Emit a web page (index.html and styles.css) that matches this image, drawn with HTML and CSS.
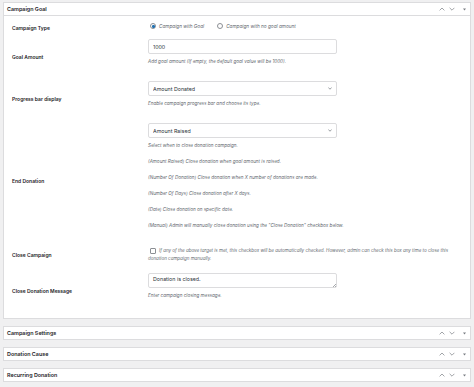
FILE: index.html
```html
<!DOCTYPE html>
<html lang="en">
<head>
    <meta charset="UTF-8">
    <meta name="viewport" content="width=device-width, initial-scale=1.0">
    <title>Campaign Goal</title>
    <link rel="stylesheet" href="styles.css">
</head>
<body>

    <div class="postbox open">
        <div class="postbox-header">
            <h2>Campaign Goal</h2>
            <div class="handle-actions">
                <svg width="6" height="4" viewBox="0 0 6 4"><path d="M0.6 3.4 L3 1 L5.4 3.4" fill="none" stroke="#787c82" stroke-width="0.7"/></svg>
                <svg width="6" height="4" viewBox="0 0 6 4"><path d="M0.6 0.8 L3 3.2 L5.4 0.8" fill="none" stroke="#787c82" stroke-width="0.7"/></svg>
                <svg class="caret" width="3" height="3" viewBox="0 0 3 3"><path d="M0 0.6 H3 L1.5 2.4 Z" fill="#787c82"/></svg>
            </div>
        </div>
        <div class="inside">
            <div class="field-row">
                <div class="field-label">Campaign Type</div>
                <div class="field-input radio-group">
                    <label class="choice"><input type="radio" name="campaign_type" checked>Campaign with Goal</label>
                    <label class="choice"><input type="radio" name="campaign_type">Campaign with no goal amount</label>
                </div>
            </div>

            <div class="field-row">
                <div class="field-label">Goal Amount</div>
                <div class="field-input">
                    <input type="text" class="text-input" value="1000">
                    <p class="description">Add goal amount (If empty, the default goal value will be 1000).</p>
                </div>
            </div>

            <div class="field-row">
                <div class="field-label">Progress bar display</div>
                <div class="field-input">
                    <div class="select-wrap">
                        <select class="select-input">
                            <option>Amount Donated</option>
                        </select>
                        <svg class="select-arrow" width="4" height="3" viewBox="0 0 4 3"><path d="M0.4 0.7 L2 2.2 L3.6 0.7" fill="none" stroke="#50575e" stroke-width="0.6"/></svg>
                    </div>
                    <p class="description">Enable campaign progress bar and choose its type.</p>
                </div>
            </div>

            <div class="field-row">
                <div class="field-label">End Donation</div>
                <div class="field-input">
                    <div class="select-wrap">
                        <select class="select-input">
                            <option>Amount Raised</option>
                        </select>
                        <svg class="select-arrow" width="4" height="3" viewBox="0 0 4 3"><path d="M0.4 0.7 L2 2.2 L3.6 0.7" fill="none" stroke="#50575e" stroke-width="0.6"/></svg>
                    </div>
                    <p class="description">Select when to close donation campaign.</p>
                    <p class="description">(Amount Raised) Close donation when goal amount is raised.</p>
                    <p class="description">(Number Of Donation) Close donation when X number of donations are made.</p>
                    <p class="description">(Number Of Days) Close donation after X days.</p>
                    <p class="description">(Date) Close donation on specific date.</p>
                    <p class="description">(Manual) Admin will manually close donation using the "Close Donation" checkbox below.</p>
                </div>
            </div>

            <div class="field-row checkbox-row">
                <div class="field-label">Close Campaign</div>
                <div class="field-input checkbox-text">
                    <input type="checkbox">If any of the above target is met, this checkbox will be automatically checked. However, admin can check this box any time to close this donation campaign manually.
                </div>
            </div>

            <div class="field-row">
                <div class="field-label">Close Donation Message</div>
                <div class="field-input">
                    <div class="textarea-wrap">
                        <textarea class="textarea-input">Donation is closed.</textarea>
                    </div>
                    <p class="description">Enter campaign closing message.</p>
                </div>
            </div>
        </div>
    </div>

    <div class="postbox">
        <div class="postbox-header">
            <h2>Campaign Settings</h2>
            <div class="handle-actions">
                <svg width="6" height="4" viewBox="0 0 6 4"><path d="M0.6 3.4 L3 1 L5.4 3.4" fill="none" stroke="#787c82" stroke-width="0.7"/></svg>
                <svg width="6" height="4" viewBox="0 0 6 4"><path d="M0.6 0.8 L3 3.2 L5.4 0.8" fill="none" stroke="#787c82" stroke-width="0.7"/></svg>
                <svg class="caret" width="3" height="3" viewBox="0 0 3 3"><path d="M0 0.6 H3 L1.5 2.4 Z" fill="#787c82"/></svg>
            </div>
        </div>
    </div>

    <div class="postbox">
        <div class="postbox-header">
            <h2>Donation Cause</h2>
            <div class="handle-actions">
                <svg width="6" height="4" viewBox="0 0 6 4"><path d="M0.6 3.4 L3 1 L5.4 3.4" fill="none" stroke="#787c82" stroke-width="0.7"/></svg>
                <svg width="6" height="4" viewBox="0 0 6 4"><path d="M0.6 0.8 L3 3.2 L5.4 0.8" fill="none" stroke="#787c82" stroke-width="0.7"/></svg>
                <svg class="caret" width="3" height="3" viewBox="0 0 3 3"><path d="M0 0.6 H3 L1.5 2.4 Z" fill="#787c82"/></svg>
            </div>
        </div>
    </div>

    <div class="postbox">
        <div class="postbox-header">
            <h2>Recurring Donation</h2>
            <div class="handle-actions">
                <svg width="6" height="4" viewBox="0 0 6 4"><path d="M0.6 3.4 L3 1 L5.4 3.4" fill="none" stroke="#787c82" stroke-width="0.7"/></svg>
                <svg width="6" height="4" viewBox="0 0 6 4"><path d="M0.6 0.8 L3 3.2 L5.4 0.8" fill="none" stroke="#787c82" stroke-width="0.7"/></svg>
                <svg class="caret" width="3" height="3" viewBox="0 0 3 3"><path d="M0 0.6 H3 L1.5 2.4 Z" fill="#787c82"/></svg>
            </div>
        </div>
    </div>

</body>
</html>
```

FILE: styles.css
```css
body {
    margin: 0;
    padding: 2px 3px;
    background: #f0f0f1;
    font-family: Inter, "Noto Sans", sans-serif;
    color: #1d2327;
}

.postbox {
    background: #fff;
    border: 1px solid #dcdcde;
    margin-bottom: 7px;
}

.postbox-header {
    display: flex;
    align-items: center;
    justify-content: space-between;
    height: 12px;
    padding: 0 4px 0 3px;
}

.postbox.open .postbox-header {
    border-bottom: 1px solid #dcdcde;
}

.postbox-header h2 {
    margin: 0;
    font-size: 5.4px;
    font-weight: 600;
}

.handle-actions {
    display: flex;
    align-items: center;
    gap: 4px;
}

.handle-actions svg {
    display: block;
}

.handle-actions .caret {
    margin-left: 4px;
}

.inside {
    display: flex;
    flex-direction: column;
    gap: 7px;
    padding: 7px 12px 10px 8px;
}

.field-row {
    display: grid;
    grid-template-columns: 136px 1fr;
}

.checkbox-row {
    padding: 2px 0 3px;
}

.field-label {
    align-self: center;
    font-size: 5px;
    font-weight: 600;
}

.radio-group {
    display: flex;
    align-items: center;
    gap: 11px;
    height: 6px;
    padding-bottom: 3px;
}

.choice {
    display: flex;
    align-items: center;
    font-size: 4.7px;
    font-style: italic;
    color: #646970;
}

input[type="radio"],
input[type="checkbox"] {
    appearance: none;
    box-sizing: border-box;
    width: 6px;
    height: 6px;
    margin: 0 3px 0 2px;
    border: 0.6px solid #8c8f94;
    background: #fff;
}

input[type="radio"] {
    border-radius: 50%;
    position: relative;
}

input[type="radio"]:checked::before {
    content: "";
    position: absolute;
    left: 1.2px;
    top: 1.2px;
    width: 2.4px;
    height: 2.4px;
    border-radius: 50%;
    background: #2271b1;
}

input[type="checkbox"] {
    border-radius: 1px;
    vertical-align: -1.5px;
}

.text-input,
.select-input,
.textarea-input {
    display: block;
    box-sizing: border-box;
    width: 189px;
    height: 15px;
    margin: 0;
    border: 1px solid #dcdcde;
    border-radius: 2px;
    background: #fff;
    color: #2c3338;
    font-family: Inter, "Noto Sans", sans-serif;
    font-size: 5.3px;
    padding: 0 4px;
    outline: none;
}

.select-input {
    appearance: none;
}

.select-wrap,
.textarea-wrap {
    position: relative;
    width: 189px;
}

.select-arrow {
    position: absolute;
    right: 5px;
    top: 6px;
}

.textarea-input {
    resize: none;
    padding-top: 2px;
    line-height: 6px;
}

.textarea-wrap::after {
    content: "";
    position: absolute;
    right: 1.5px;
    bottom: 1.5px;
    width: 3px;
    height: 3px;
    background: linear-gradient(135deg, transparent 45%, #a7aaad 45%, #a7aaad 55%, transparent 55%, transparent 75%, #a7aaad 75%, #a7aaad 85%, transparent 85%);
}

.description {
    margin: 4px 0 9px;
    font-size: 4.6px;
    line-height: 7px;
    font-style: italic;
    color: #646970;
}

.checkbox-text {
    font-size: 4.5px;
    line-height: 8px;
    font-style: italic;
    color: #646970;
}
```
